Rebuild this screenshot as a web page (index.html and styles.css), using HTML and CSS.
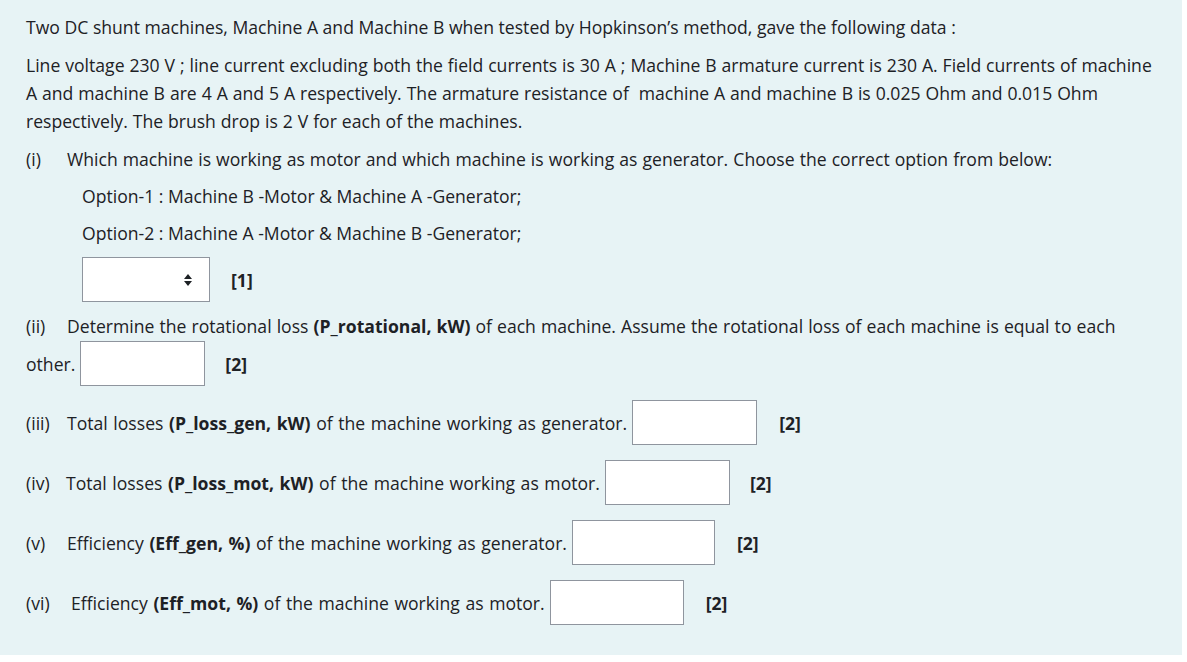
FILE: index.html
```html
<!DOCTYPE html>
<html>
<head>
<meta charset="utf-8">
<link rel="stylesheet" href="styles.css">
</head>
<body>
<div class="panel">
  <p class="line p1">Two DC shunt machines, Machine A and Machine B when tested by Hopkinson’s method, gave the following data :</p>
  <p class="para">Line voltage 230 V ; line current excluding both the field currents is 30 A ; Machine B armature current is 230 A. Field currents of machine<br>A and machine B are 4 A and 5 A respectively. The armature resistance of&nbsp; machine A and machine B is 0.025 Ohm and 0.015 Ohm<br>respectively. The brush drop is 2 V for each of the machines.</p>
  <p class="line q"><span class="num">(i)</span><span>Which machine is working as motor and which machine is working as generator. Choose the correct option from below:</span></p>
  <p class="line opt">Option-1 : Machine B -Motor &amp; Machine A -Generator;</p>
  <p class="line opt">Option-2 : Machine A -Motor &amp; Machine B -Generator;</p>
  <div class="row sel-row">
    <div class="select">
      <svg class="arrows" width="8" height="12" viewBox="0 0 8 12"><path d="M4 0 L8 5 L0 5 Z M0 7 L8 7 L4 12 Z" fill="#1d2125"/></svg>
    </div>
    <b class="mark m1">[1]</b>
  </div>
  <p class="line q q2"><span class="num">(ii)</span><span>Determine the rotational loss <b>(P_rotational, kW)</b> of each machine. Assume the rotational loss of each machine is equal to each</span></p>
  <div class="row r2"><span>other.</span><div class="box b2"></div><b class="mark">[2]</b></div>
  <div class="row r3"><span class="num">(iii)</span><span>Total losses <b>(P_loss_gen, kW)</b> of the machine working as generator.</span><div class="box b3"></div><b class="mark">[2]</b></div>
  <div class="row r4"><span class="num n4">(iv)</span><span>Total losses <b>(P_loss_mot, kW)</b> of the machine working as motor.</span><div class="box b4"></div><b class="mark">[2]</b></div>
  <div class="row r5"><span class="num">(v)</span><span>Efficiency <b>(Eff_gen, %)</b> of the machine working as generator.</span><div class="box b5"></div><b class="mark">[2]</b></div>
  <div class="row r6"><span class="num n6">(vi)</span><span>Efficiency <b>(Eff_mot, %)</b> of the machine working as motor.</span><div class="box b6"></div><b class="mark">[2]</b></div>
</div>
</body>
</html>
```
FILE: styles.css
```css
html, body {
  margin: 0;
  padding: 0;
  background: #ffffff;
}
body {
  font-family: "Open Sans", "Noto Sans", sans-serif;
  font-size: 17.6px;
  color: #1d2125;
}
.panel {
  width: 1182px;
  box-sizing: border-box;
  background: #e7f3f5;
  padding: 13px 0 30px 26px;
}
p {
  margin: 0;
}
b {
  font-weight: 700;
}
.line {
  line-height: 28px;
  white-space: nowrap;
}
.para {
  line-height: 28px;
  margin-top: 10px;
  white-space: nowrap;
  word-spacing: 0.35px;
}
.q {
  margin-top: 10px;
  display: flex;
  word-spacing: 0.5px;
}
.num {
  width: 41px;
  flex: none;
  word-spacing: 0;
}
.opt {
  margin-top: 9px;
  padding-left: 56px;
}
.row {
  display: flex;
  align-items: center;
  white-space: nowrap;
}
.sel-row {
  margin-top: 10px;
  padding-left: 56px;
}
.select {
  width: 128px;
  height: 45px;
  box-sizing: border-box;
  border: 1px solid #8f959e;
  background: #fff;
  display: flex;
  align-items: center;
  justify-content: flex-end;
  padding-right: 17px;
}
.mark {
  margin-left: 22px;
  word-spacing: 0;
}
.m1 {
  margin-left: 21px;
}
.box {
  height: 45px;
  box-sizing: border-box;
  border: 1px solid #8f959e;
  background: #fff;
  margin-left: 5px;
}
.r2 { margin-top: 1px; }
.r2 .mark { margin-left: 20px; }
.r3 { margin-top: 14px; word-spacing: 1px; }
.r4, .r5, .r6 { margin-top: 15px; word-spacing: 1px; }
.r4 .mark { margin-left: 20px; }
.b2 { width: 125px; }
.b3 { width: 125px; }
.b4 { width: 125px; }
.b5 { width: 143px; }
.b6 { width: 134px; }
.n4 { width: 40px; }
.n6 { width: 45px; }
```
